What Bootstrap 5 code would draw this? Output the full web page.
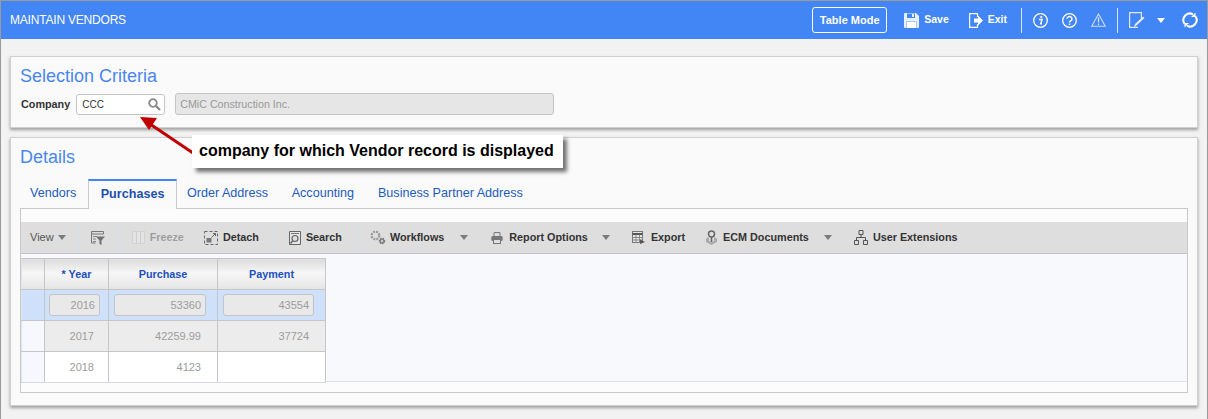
<!DOCTYPE html>
<html lang="en">
<head>
<meta charset="utf-8">
<title>Maintain Vendors</title>
<link href="https://cdn.jsdelivr.net/npm/bootstrap@5.3.0/dist/css/bootstrap.min.css" rel="stylesheet">
<style>
html,body{height:419px;overflow:hidden}
body{background:#f2f2f2;font-family:"Liberation Sans",Arial,sans-serif;font-size:11px;color:#333;border-top:1px solid #9a9a9a;border-left:1px solid #9a9a9a;border-right:1px solid #9a9a9a;position:relative}
.app-head{height:38px;background:#4285f4;color:#fff;padding:0 9px 0 9px}
.app-title{font-size:12px;letter-spacing:-.2px}
.head-btn{border:1px solid #fff;border-radius:3px;height:26px;width:75px;font-weight:700;font-size:11px;color:#fff;background:transparent;padding:0;margin-right:17px}
.head-act{font-weight:700;font-size:10.5px;color:#fff;gap:5px}
.act-save{margin-right:20px}
.act-exit{margin-right:14px}
.head-sep{width:1px;height:25px;background:#d5e3fb}
.m11{margin-left:11px}
.m12{margin-left:12px}
.m14{margin-left:14px}
.m17{margin-left:17px}
.pane{background:#fafafa;border:1px solid #d0d0d0;box-shadow:0 2px 3px rgba(0,0,0,.35);margin:0 9px}
.pane-one{margin-top:17px;height:72px;padding:9px 9px 0 9px}
.pane-two{margin-top:9px;height:269px;padding:9px 9px 0 9px}
.pane-title{font-size:18px;font-weight:400;line-height:20px;color:#4a86f0;margin:0}
.co-label{font-weight:700;font-size:10.8px;color:#333;margin:0 6px 0 1px}
.co-field{width:89px;height:21px;background:#fff;border:1px solid #c4c4c4;border-radius:3px;padding:0 3px 0 5px;font-size:10px;margin-right:10px}
.co-name{width:379px;height:22px;background:#e6e6e6;border:1px solid #c4c4c4;border-radius:3px;padding:0 4px;font-size:10.7px;color:#999}
.sel-row{margin-top:7px}
.tab-row{margin:12px 0 0 -1.5px;height:29px}
.tab-link{font-size:12.6px;color:#1c5bc0;padding:0 11.5px;line-height:28px;white-space:nowrap}
.tab-link.on{background:#fafafa;font-weight:700;border:1px solid #c9c9c9;border-top:2px solid #4285f4;border-bottom:0;color:#1c4fae;height:30px;padding:0 11.5px;line-height:26px;position:relative;z-index:1;margin:0 -1.5px 0 .5px}
.tab-wide{padding:0 12px}
.inner-box{border:1px solid #c9c9c9;height:185px;background:#fcfcfc;padding-top:13px}
.tool-bar{height:32px;background:#dedede;border-bottom:1px solid #c4c4c4;padding-left:9px;white-space:nowrap}
.tool-item{font-weight:700;color:#333;font-size:10.8px;gap:5px}
.tool-off{color:#9e9e9e}
.tool-view{font-weight:400;font-size:11px;color:#555;margin-right:4px}
.tool-sep{width:1px;height:30px;background:#d6dfe6}
.caret-d{width:0;height:0;border-left:4px solid transparent;border-right:4px solid transparent;border-top:5px solid #7b7b7b;display:inline-block;flex:none}
.caret-w{border-top-color:#fff}
.i-filter{margin:0 14px 0 11px}
.i-freeze{margin-left:12px;margin-right:20px}
.i-detach{margin-right:13px}
.i-search{margin:0 15px 0 15px}
.i-flows{margin-left:12px;gap:4px}
.c-a{margin:0 23px 0 16px}
.i-report{gap:6px}
.c-b{margin:0 22px 0 14px}
.i-export{gap:6px;margin-right:20px}
.c-c{margin:0 22px 0 15px}
.c-view{margin-right:13px}
.tbl-area{background:#f8f9fd;height:128px;padding-top:4px;border-bottom:1px solid #dde1ea}
.vend-tbl{border-collapse:collapse;table-layout:fixed;width:304px;font-size:11px}
.vend-tbl th{height:31px;background:linear-gradient(#dcdcdc,#f7f7f7 45%,#e4e4e4);border:1px solid #c6c6c6;color:#1d4fc2;text-align:center;font-weight:700;font-size:10.8px;padding:0}
.vend-tbl td{height:31px;border:1px solid #c6c6c6;text-align:right;color:#9c9c9c;padding:0 16px 0 0;font-size:11px}
.vend-tbl th:first-child,.vend-tbl td.gut{border-left-color:#dfe3ea}
.vend-tbl tr:last-child td{border-bottom-color:#d6d9e0}
.vend-tbl td.yr{padding-right:14px}
.vend-tbl td.has-inp{padding:0 11px 0 5px}
.vend-tbl td.has-inp.yr{padding:0 8px 0 4px}
.vend-tbl tr.sel td{background:#cfe0fb}
.vend-tbl tr.alt td{background:#ececec}
.vend-tbl tr.plain td{background:#fff}
.vend-tbl tr.alt td.gut,.vend-tbl tr.plain td.gut{background:#f6f8fd}
.cell-inp{display:block;height:22px;line-height:20px;border:1px solid #c4c4c4;border-radius:3px;background:#e9e9e9;padding-right:4px}
.call-out{position:absolute;left:191px;top:134px;width:371px;height:33px;background:#fff;box-shadow:4px 4px 4px rgba(0,0,0,.55);font-weight:700;font-size:16px;color:#000;line-height:31px;padding-left:7px;white-space:nowrap}
.call-arrow{position:absolute;left:135px;top:108px}
</style>
</head>
<body>
<header class="app-head d-flex align-items-center">
  <span class="app-title">MAINTAIN VENDORS</span>
  <div class="ms-auto d-flex align-items-center">
    <button class="head-btn" type="button">Table Mode</button>
    <span class="head-act act-save d-flex align-items-center">
      <svg width="15" height="15" viewBox="0 0 15 15"><path d="M0 1a1 1 0 0 1 1-1h11l3 3v11a1 1 0 0 1-1 1H1a1 1 0 0 1-1-1z" fill="#e8f0fe"/><rect x="3" y="0.500" width="8" height="4.500" fill="#4285f4"/><rect x="8" y="1" width="2" height="3" fill="#e8f0fe"/><rect x="2" y="8" width="11" height="7" fill="#a9c7fa"/><rect x="3" y="9" width="9" height="6" fill="#fff"/></svg>
      Save</span>
    <span class="head-act act-exit d-flex align-items-center">
      <svg width="14" height="15" viewBox="0 0 14 15"><path d="M8.500 4V.6H.6v13.800h7.900V11" fill="none" stroke="#fff" stroke-width="1.200"/><path d="M5 5.500h4V2.500l5 5-5 5V9.500H5z" fill="#fff"/></svg>
      Exit</span>
    <span class="head-sep"></span>
    <svg class="m11" width="15" height="15" viewBox="0 0 15 15"><circle cx="7.500" cy="7.500" r="6.800" fill="none" stroke="#fff" stroke-width="1.300"/><circle cx="8.300" cy="4" r="1.100" fill="#fff"/><path d="M6 6.400h3l-1.200 4.400h1.200" fill="none" stroke="#fff" stroke-width="1.500"/></svg>
    <svg class="m14" width="15" height="15" viewBox="0 0 15 15"><circle cx="7.500" cy="7.500" r="6.800" fill="none" stroke="#fff" stroke-width="1.300"/><path d="M5 5.800a2.500 2.300 0 1 1 3.700 2.100c-.9.500-1.200.9-1.200 1.700" fill="none" stroke="#fff" stroke-width="1.500"/><rect x="6.700" y="10.500" width="1.600" height="1.600" fill="#fff"/></svg>
    <svg class="m14" width="15" height="14" viewBox="0 0 15 14"><path d="M7.500 1L14.300 13.300H.7z" fill="none" stroke="#cfe0fb" stroke-width="1.100"/><path d="M7.500 4.500v5M7.500 10.500v1.500" stroke="#cfe0fb" stroke-width="1.300"/></svg>
    <span class="head-sep m11"></span>
    <svg class="m11" width="16" height="16" viewBox="0 0 16 16"><path d="M9 15.400H.6V.6h11.800v6" fill="none" stroke="#dfe9fb" stroke-width="1.200"/><path d="M5 15.500l1-3.500 8-7.500 1.500 1.500-8 7.500z" fill="#dfe9fb"/></svg>
    <span class="caret-d caret-w m12"></span>
    <svg class="m17" width="16" height="16" viewBox="0 0 16 16"><path d="M2.700 11.800A6.400 6.400 0 0 1 11 2.400M13.300 4.200A6.400 6.400 0 0 1 5 13.600" fill="none" stroke="#fff" stroke-width="2"/><path d="M13.500 .5v4.500H9zM2.500 15.500V11H7z" fill="#fff"/></svg>
  </div>
</header>

<section class="pane pane-one">
  <h2 class="pane-title">Selection Criteria</h2>
  <div class="sel-row d-flex align-items-center">
    <span class="co-label">Company</span>
    <div class="co-field d-flex align-items-center justify-content-between">
      <span>CCC</span>
      <svg width="13" height="13" viewBox="0 0 13 13"><circle cx="5" cy="5" r="3.800" fill="none" stroke="#888" stroke-width="1.800"/><path d="M8 8l4 4" stroke="#888" stroke-width="2.400"/></svg>
    </div>
    <div class="co-name d-flex align-items-center">CMiC Construction Inc.</div>
  </div>
</section>

<section class="pane pane-two">
  <h2 class="pane-title">Details</h2>
  <nav class="tab-row d-flex">
    <span class="tab-link">Vendors</span>
    <span class="tab-link on">Purchases</span>
    <span class="tab-link">Order Address</span>
    <span class="tab-link tab-wide">Accounting</span>
    <span class="tab-link tab-wide">Business Partner Address</span>
  </nav>
  <div class="inner-box">
    <div class="tool-bar d-flex align-items-center">
      <span class="tool-view">View</span><span class="caret-d c-view"></span>
      <span class="tool-sep"></span>
      <svg class="i-filter" width="14" height="14" viewBox="0 0 14 14"><path d="M.5.500h12v2.500H.5zM.5 3v9h4" fill="#dedede" stroke="#777"/><path d="M2 5.500h4M2 8h3M2 10.500h3" stroke="#888"/><path d="M5 5.500h9l-3.500 4v4.500l-2-1V9.500z" fill="#707070"/></svg>
      <span class="tool-sep"></span>
      <span class="tool-item tool-off d-flex align-items-center i-freeze"><svg width="13" height="13" viewBox="0 0 13 13"><rect x=".5" y=".5" width="12" height="12" fill="#e4e4e4" stroke="#d2d2d2"/><path d="M4.500 1v11M8.500 1v11" stroke="#cdcdcd"/></svg>Freeze</span>
      <span class="tool-item d-flex align-items-center i-detach"><svg width="14" height="14" viewBox="0 0 14 14"><rect x=".5" y=".5" width="13" height="13" fill="none" stroke="#666" stroke-dasharray="3 2"/><rect x="2.500" y="7" width="5" height="4.500" fill="#777"/><path d="M7.500 6.500l4-4M9 2.500h2.500V5" fill="none" stroke="#666"/></svg>Detach</span>
      <span class="tool-sep"></span>
      <span class="tool-item d-flex align-items-center i-search"><svg width="13" height="14" viewBox="0 0 13 14"><path d="M1.500.5h11v13h-11z" fill="#e6e6e6" stroke="#666"/><path d="M3 2.500h8" stroke="#777"/><circle cx="7" cy="7.500" r="3" fill="#dedede" stroke="#666" stroke-width="1.200"/><path d="M4.800 9.800L2.500 12.500" stroke="#666" stroke-width="1.600"/></svg>Search</span>
      <span class="tool-sep"></span>
      <span class="tool-item d-flex align-items-center i-flows"><svg width="16" height="15" viewBox="0 0 16 15"><circle cx="5.500" cy="5.500" r="3.800" fill="none" stroke="#999" stroke-width="2.200" stroke-dasharray="2 1"/><circle cx="12" cy="11" r="2.600" fill="#888" stroke="#777" stroke-width="1.200" stroke-dasharray="1.500 1"/><circle cx="12" cy="11" r="1" fill="#dedede"/></svg>Workflows</span>
      <span class="caret-d c-a"></span>
      <span class="tool-item d-flex align-items-center i-report"><svg width="12" height="12" viewBox="0 0 12 12"><path d="M3 4V.6h6V4" fill="none" stroke="#777"/><rect x=".3" y="4" width="11.400" height="5" rx="1.500" fill="#777"/><rect x="2.500" y="7.500" width="7" height="4" fill="#dedede" stroke="#777"/></svg>Report Options</span>
      <span class="caret-d c-b"></span>
      <span class="tool-item d-flex align-items-center i-export"><svg width="13" height="13" viewBox="0 0 13 13"><rect x=".5" y=".5" width="10" height="11" fill="#e6e6e6" stroke="#777"/><path d="M.5 3h10" stroke="#555" stroke-width="2"/><path d="M4 3.500v8M7.500 3.500v8M.5 6.500h10M.5 9h10" stroke="#888"/><path d="M8 8.500l5 2.500-5 2z" fill="#555"/></svg>Export</span>
      <span class="tool-item d-flex align-items-center"><svg width="13" height="15" viewBox="0 0 13 15"><path d="M1 8.500l3-1.500v4l2.500 1.500L9 11V7l3 1.500V12l-5.500 3L1 12z" fill="#aaa"/><circle cx="6.500" cy="4" r="3" fill="#dedede" stroke="#666" stroke-width="1.500"/><path d="M6.500 7v5" stroke="#666" stroke-width="1.600"/></svg>ECM Documents</span>
      <span class="caret-d c-c"></span>
      <span class="tool-item d-flex align-items-center"><svg width="14" height="15" viewBox="0 0 14 15"><path d="M5 .5h4v4H5zM.5 10.500h4v4h-4zM9.500 10.500h4v4h-4z" fill="none" stroke="#555"/><path d="M7 4.500v3M2.500 10.500v-3h9v3" fill="none" stroke="#555"/></svg>User Extensions</span>
    </div>
    <div class="tbl-area">
      <table class="vend-tbl">
        <colgroup><col style="width:23px"><col style="width:64px"><col style="width:109px"><col style="width:108px"></colgroup>
        <thead><tr><th></th><th>* Year</th><th>Purchase</th><th>Payment</th></tr></thead>
        <tbody>
          <tr class="sel"><td class="gut"></td><td class="has-inp yr"><span class="cell-inp">2016</span></td><td class="has-inp"><span class="cell-inp">53360</span></td><td class="has-inp"><span class="cell-inp">43554</span></td></tr>
          <tr class="alt"><td class="gut"></td><td class="yr">2017</td><td>42259.99</td><td>37724</td></tr>
          <tr class="plain"><td class="gut"></td><td class="yr">2018</td><td>4123</td><td></td></tr>
        </tbody>
      </table>
    </div>
  </div>
</section>

<svg class="call-arrow" width="62" height="50" viewBox="0 0 62 50"><path d="M57 44L14 15" stroke="#c00000" stroke-width="3"/><path d="M4 8l17 1-8 12z" fill="#c00000"/></svg>
<div class="call-out">company for which Vendor record is displayed</div>
</body>
</html>
